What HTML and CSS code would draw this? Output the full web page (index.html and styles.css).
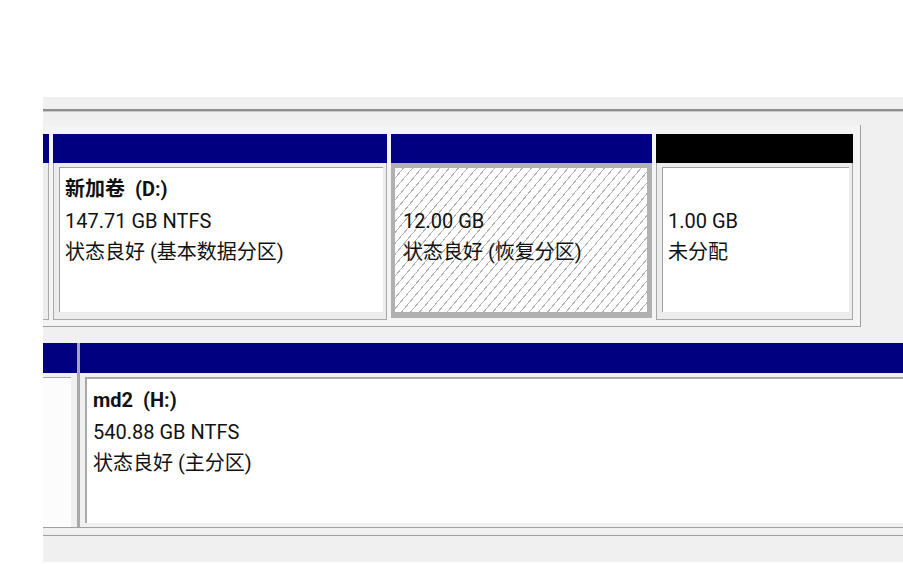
FILE: index.html
```html
<!DOCTYPE html>
<html lang="zh-CN">
<head>
  <meta charset="UTF-8" />
  <meta name="viewport" content="width=device-width, initial-scale=1.0"/>
  <title>磁盘管理</title>
  <link rel="stylesheet" href="styles.css">
</head>
<body>
  <div class="panel">
    <div class="strip-top"></div>

    <!-- disk with D:, recovery and unallocated space -->
    <div class="disk disk-1">
      <div class="part stub">
        <div class="part-head"></div>
        <div class="part-body"></div>
      </div>

      <div class="part part-d">
        <div class="part-head"></div>
        <div class="part-body">
          <div class="part-box">
            <div class="vol-name">新加卷&nbsp; (D:)</div>
            <div>147.71 GB NTFS</div>
            <div>状态良好 (基本数据分区)</div>
          </div>
        </div>
      </div>

      <div class="part part-rec">
        <div class="part-head"></div>
        <div class="part-body selected">
          <div class="part-box hatch">
            <div>&nbsp;</div>
            <div>12.00 GB</div>
            <div>状态良好 (恢复分区)</div>
          </div>
        </div>
      </div>

      <div class="part part-free">
        <div class="part-head black"></div>
        <div class="part-body">
          <div class="part-box">
            <div>&nbsp;</div>
            <div>1.00 GB</div>
            <div>未分配</div>
          </div>
        </div>
      </div>
    </div>

    <!-- disk with H: -->
    <div class="disk disk-2">
      <div class="part stub">
        <div class="part-head"></div>
        <div class="part-body">
          <div class="stub-box"></div>
        </div>
      </div>

      <div class="part part-h">
        <div class="part-head"></div>
        <div class="part-body">
          <div class="part-box">
            <div class="vol-name">md2&nbsp; (H:)</div>
            <div>540.88 GB NTFS</div>
            <div>状态良好 (主分区)</div>
          </div>
        </div>
      </div>
    </div>

    <div class="strip-bottom"></div>
  </div>
</body>
</html>
```

FILE: styles.css
```css
* {
  box-sizing: border-box;
}

body {
  margin: 0;
  background: #fff;
  font-family: Roboto, "Noto Sans CJK SC", sans-serif;
  font-size: 20px;
  color: #111;
}

.panel {
  margin: 97px 0 0 43px;
  height: 465px;
  background: #f0f0f0;
  overflow: hidden;
}

.strip-top {
  height: 14px;
  border-bottom: 2px solid #8f8f8f;
  box-shadow: 0 1px 0 #c8c8c8;
}

.disk {
  display: flex;
}

.disk-1 {
  width: 818px;
  margin-top: 14px;
  gap: 4px;
  padding: 9px 7px 6px 0;
  border-right: 1px solid #a0a0a0;
  border-bottom: 1px solid #a0a0a0;
  background: #f4f4f4;
}

.part {
  display: flex;
  flex-direction: column;
}

.part-head {
  height: 29px;
  background: #000080;
}

.part-head.black {
  background: #000;
}

.part-body {
  height: 157px;
  padding: 4px 3px 7px 5px;
  border: 1px solid #a8a8a8;
  border-top: none;
  background: #ececec;
}

.part-box {
  height: 100%;
  padding: 6px 0 0 5px;
  line-height: 31.5px;
  background: #fff;
  border-top: 1px solid #a0a0a0;
  border-left: 1px solid #a0a0a0;
  white-space: nowrap;
}

.vol-name {
  font-weight: bold;
}

.disk-1 .stub {
  width: 6px;
}

.disk-1 .stub .part-body {
  padding: 0;
  border-left: none;
}

.part-d {
  width: 334px;
}

.part-rec {
  width: 261px;
}

.part-free {
  width: 197px;
}

.part-body.selected {
  height: 155px;
  padding: 5px 5px 6px 4px;
  border: none;
  background: #b0b0b0;
}

.part-box.hatch {
  border: none;
  padding-left: 8px;
  background: repeating-linear-gradient(130deg, #fff 0 6px, #b4b4b4 6px 7px);
}

/* second disk */
.disk-2 {
  margin-top: 16px;
  border-bottom: 1px solid #a0a0a0;
}

.disk-2 .part-head {
  height: 30px;
}

.disk-2 .part-body {
  height: 154px;
  border: none;
  background: #f0f0f0;
}

.disk-2 .stub {
  width: 34px;
}

.disk-2 .stub .part-body {
  padding: 4px 6px 0 0;
}

.stub-box {
  height: 100%;
  border-top: 1px solid #a8a8a8;
  background: #fcfcfc;
}

.part-h {
  flex: 1;
  border-left: 3px solid #a8a8a8;
}

.part-h .part-body {
  padding: 4px 0 4px 5px;
}

.part-h .part-box {
  padding-left: 6px;
  border-top: 2px solid #a8a8a8;
  border-left: 2px solid #a8a8a8;
}

.strip-bottom {
  margin-top: 7px;
  border-top: 1px solid #a0a0a0;
}
```
